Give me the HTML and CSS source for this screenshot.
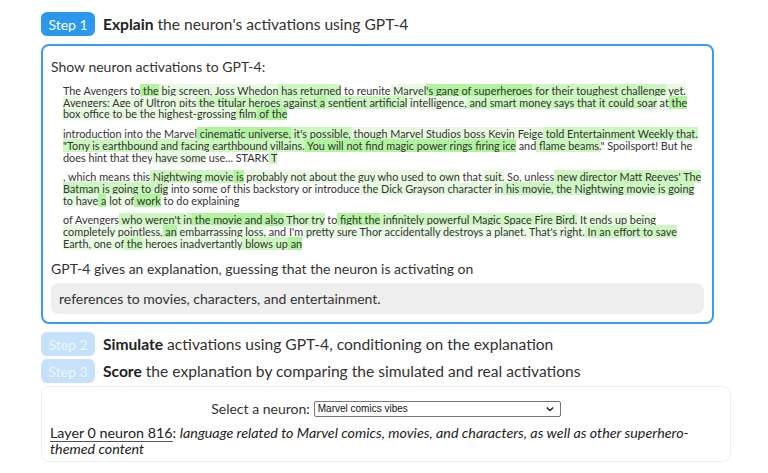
FILE: index.html
```html
<!DOCTYPE html>
<html>
<head>
<meta charset="utf-8">
<link rel="stylesheet" href="styles.css">
</head>
<body>
<div class="page">
  <div class="step-row first">
    <span class="badge active">Step 1</span>
    <span class="step-title"><b>Explain</b> the neuron's activations using GPT-4</span>
  </div>
  <div class="explain-box">
    <div class="label">Show neuron activations to GPT-4:</div>
    <div class="passages">
      <p class="seg"><span>The Avengers to</span><span class="a3"> the</span><span class="a1"> big screen,</span><span class="a1"> Joss Whedon</span><span class="a2"> has returned</span><span> to reunite</span><span class="a1"> Marvel</span><span class="a3">'s gang of superheroes</span><span class="a2"> for their toughest challenge</span><span class="a1"> yet.</span><br><span class="a1">Avengers: Age of Ultron pits</span><span class="a2"> the titular heroes against</span><span class="a3"> a</span><span class="a2"> sentient artificial</span><span class="a1"> intelligence,</span><span class="a2"> and smart money says that it could soar</span><span class="a1"> at</span><span class="a3"> the</span><br><span class="a1">box office</span><span class="a1"> to be the highest-grossing</span><span class="a2"> film</span><span class="a3"> of the</span></p>
      <p class="seg"><span>introduction into the Marvel</span><span class="a3"> cinematic universe,</span><span class="a2"> it's possible,</span><span class="a1"> though</span><span class="a1"> Marvel Studios boss Kevin Feige</span><span class="a2"> told Entertainment Weekly that.</span><br><span class="a2">"Tony is earthbound and facing earthbound villains.</span><span class="a3"> You will not find magic power rings firing ice</span><span> and</span><span class="a2"> flame beams.</span><span>" Spoilsport! But he</span><br><span>does hint that they</span><span class="a1"> have some</span><span> use... STARK</span><span class="a2"> T</span></p>
      <p class="seg"><span>, which means this</span><span class="a2"> Nightwing movie</span><span class="a3"> is</span><span class="a1"> probably not</span><span class="a1"> about the guy</span><span class="a1"> who used to own</span><span> that</span><span class="a1"> suit.</span><span> So, unless</span><span class="a2"> new director Matt Reeves' The</span><br><span class="a2">Batman</span><span class="a2"> is going to dig</span><span> into some of this backstory or introduce</span><span class="a1"> the Dick Grayson character in</span><span class="a2"> his movie,</span><span class="a2"> the Nightwing movie is going</span><br><span class="a1">to have</span><span class="a3"> a</span><span class="a1"> lot of</span><span class="a3"> work</span><span> to do explaining</span></p>
      <p class="seg"><span>of Avengers</span><span class="a2"> who weren't in</span><span class="a3"> the movie and also</span><span class="a2"> Thor try</span><span> to</span><span class="a3"> fight the</span><span class="a2"> infinitely powerful Magic Space Fire Bird.</span><span class="a1"> It ends up being</span><br><span class="a1">completely pointless,</span><span class="a3"> an</span><span class="a1"> embarrassing loss,</span><span> and I'm</span><span class="a1"> pretty sure Thor accidentally destroys a planet.</span><span class="a1"> That's right.</span><span class="a2"> In an effort to save</span><br><span class="a1">Earth, one of</span><span class="a2"> the</span><span class="a1"> heroes inadvertantly</span><span class="a2"> blows up</span><span class="a3"> an</span></p>
    </div>
    <div class="label gives">GPT-4 gives an explanation, guessing that the neuron is activating on</div>
    <div class="explanation">references to movies, characters, and entertainment.</div>
  </div>
  <div class="step-row">
    <span class="badge faded">Step 2</span>
    <span class="step-title"><b>Simulate</b> activations using GPT-4, conditioning on the explanation</span>
  </div>
  <div class="step-row">
    <span class="badge faded">Step 3</span>
    <span class="step-title"><b>Score</b> the explanation by comparing the simulated and real activations</span>
  </div>
  <div class="neuron-box">
    <div class="select-row">
      <label class="select-label">Select a neuron:</label>
      <span class="select">Marvel comics vibes<svg class="chev" viewBox="0 0 10 6" width="8" height="6"><path d="M1 1l4 4 4-4" fill="none" stroke="#222" stroke-width="1.8"/></svg></span>
    </div>
    <div class="neuron-desc"><span class="neuron-link">Layer 0 neuron 816</span>: <i>language related to Marvel comics, movies, and characters, as well as other superhero-themed content</i></div>
  </div>
</div>
</body>
</html>
```
FILE: styles.css
```css
* { box-sizing: border-box; }
body {
  margin: 0;
  background: #fff;
  font-family: "Lato", "Noto Sans", sans-serif;
  color: #222;
}
.page {
  padding: 12px 0 0 41px;
  width: 731px;
}
.step-row {
  display: flex;
  align-items: center;
  gap: 8px;
  height: 24px;
  margin-bottom: 3px;
}
.step-row.first { margin-bottom: 8px; }
.badge {
  display: inline-flex;
  align-items: center;
  justify-content: center;
  width: 54px;
  height: 24px;
  border-radius: 6px;
  color: #fff;
  font-size: 14px;
}
.badge.active { background: #2b98ee; }
.badge.faded { background: #c6e2fa; color: #eef6fe; }
.step-title {
  font-size: 15.6px;
  color: #333;
}
.step-title b { color: #222; }
.explain-box {
  width: 673px;
  height: 280px;
  border: 2px solid #3b9bee;
  border-radius: 8px;
  padding: 13px 8px 8px 8px;
  margin-bottom: 8px;
}
.label {
  font-size: 14px;
  color: #333;
  line-height: 16px;
}
.passages {
  padding: 10px 0 0 12px;
  width: 655px;
}
.seg {
  margin: 0 0 8px 0;
  font-size: 10.85px;
  line-height: 11.7px;
  color: #333;
}
.a1 { background: #e8fbe2; }
.a2 { background: #cdf7c0; }
.a3 { background: #b2f3a0; }
.gives { margin-top: 12px; }
.explanation {
  margin-top: 6px;
  background: #eeeeee;
  border-radius: 8px;
  height: 31px;
  display: flex;
  align-items: center;
  padding-left: 8px;
  font-size: 14px;
  color: #333;
}
.neuron-box {
  margin-top: 2px;
  width: 690px;
  height: 76px;
  border: 1px solid #eeeeee;
  border-radius: 8px;
  padding: 13px 20px 0 8px;
}
.select-row {
  display: flex;
  justify-content: center;
  align-items: center;
  gap: 4px;
  padding-left: 12px;
}
.select-label { font-size: 14px; color: #333; }
.select {
  width: 247px;
  height: 16px;
  border: 1px solid #767676;
  border-radius: 2px;
  font-family: "Liberation Sans", Arial, sans-serif;
  font-size: 10px;
  display: flex;
  align-items: center;
  justify-content: space-between;
  padding: 0 6px 0 3px;
  color: #111;
}
.neuron-desc {
  margin-top: 8px;
  font-size: 14.3px;
  line-height: 16px;
  color: #222;
}
.neuron-link { border-bottom: 1px solid #555; }
```
